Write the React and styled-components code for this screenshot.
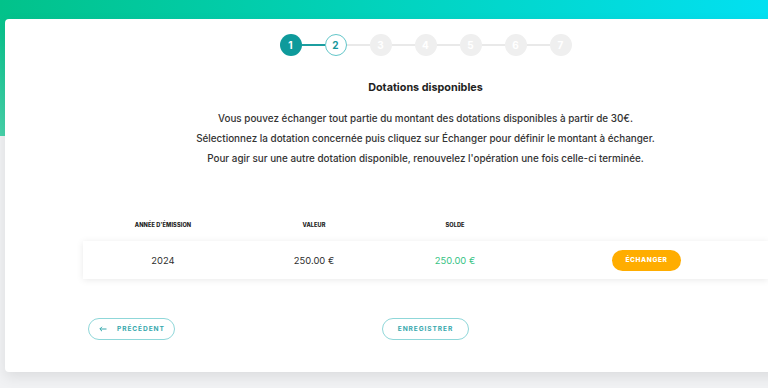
import React from "react";
import styled, { createGlobalStyle } from "styled-components";

const Global = createGlobalStyle`
  html, body { margin: 0; padding: 0; }
  body {
    overflow: hidden;
    font-family: "Inter", "Noto Sans", sans-serif;
    background:
      linear-gradient(180deg, rgba(255,255,255,0) 10%, rgba(255,255,255,0.28) 100%) 0 0 / 100% 136px no-repeat,
      linear-gradient(90deg, #02c28a 0%, #02d3bd 50%, #02e0f1 100%) 0 0 / 100% 136px no-repeat,
      #f1f2f4;
    width: 768px;
    height: 388px;
  }
`;

const Page = styled.div`
  width: 768px;
  height: 388px;
  padding-top: 19px;
  padding-left: 5px;
  box-sizing: border-box;
  overflow: hidden;
`;

const Card = styled.div`
  width: 841px;
  height: 353px;
  background: #fff;
  border-radius: 4px;
  box-shadow: 0 5px 14px rgba(0, 0, 0, 0.09);
  padding: 15px 78px 0;
  box-sizing: border-box;
  display: flex;
  flex-direction: column;
  align-items: center;
`;

const Stepper = styled.div`
  display: flex;
  align-items: center;
`;

const Step = styled.div`
  width: 22px;
  height: 22px;
  border-radius: 50%;
  box-sizing: border-box;
  display: flex;
  align-items: center;
  justify-content: center;
  font-size: 10px;
  font-weight: 700;
  background: ${(p) => (p.$state === "done" ? "#0e9a9b" : p.$state === "current" ? "#fff" : "#efefef")};
  color: ${(p) => (p.$state === "done" ? "#fff" : p.$state === "current" ? "#16979b" : "#fff")};
  border: ${(p) => (p.$state === "current" ? "1.5px solid #62c6c9" : "none")};
`;

const Connector = styled.div`
  width: 23px;
  height: 2px;
  background: ${(p) => (p.$active ? "#1c9ea0" : "#e9e9e9")};
`;

const Title = styled.h2`
  margin: 24px 0 0;
  font-size: 10.8px;
  font-weight: 700;
  color: #1f1f1f;
  line-height: 16px;
`;

const Intro = styled.div`
  margin-top: 12px;
  text-align: center;
  font-size: 9.9px;
  line-height: 20px;
  font-weight: 500;
  color: #333;
`;

const Table = styled.div`
  align-self: stretch;
  margin-top: 50px;
`;

const Grid = styled.div`
  display: grid;
  grid-template-columns: 160px 142px 140px 1fr;
  align-items: center;
  justify-items: center;
`;

const HeadRow = styled(Grid)`
  height: 14px;
  font-size: 5.6px;
  font-weight: 800;
  text-transform: uppercase;
  color: #222;
  letter-spacing: 0.1px;
`;

const BodyRow = styled(Grid)`
  margin-top: 9px;
  height: 38px;
  background: #fff;
  box-shadow: 0 1px 7px rgba(0, 0, 0, 0.09);
  font-size: 9.4px;
  color: #2e2e2e;
`;

const Cell = styled.span`
  color: ${(p) => (p.$green ? "#36c384" : "inherit")};
`;

const ExchangeButton = styled.button`
  width: 69px;
  height: 21px;
  border: none;
  border-radius: 11px;
  background: #ffad00;
  color: #fff;
  font-family: inherit;
  font-size: 6.6px;
  font-weight: 800;
  letter-spacing: 0.6px;
  padding: 0;
`;

const Actions = styled.div`
  align-self: stretch;
  margin-top: 39px;
  display: grid;
  grid-template-columns: 1fr auto 1fr;
  align-items: center;
`;

const OutlineButton = styled.button`
  justify-self: ${(p) => p.$justify || "center"};
  margin-left: ${(p) => (p.$withIcon ? "5px" : "0")};
  width: 87px;
  height: 22px;
  border: 1.5px solid #8fd7d9;
  border-radius: 11px;
  background: #fff;
  color: #37a8ad;
  font-family: inherit;
  font-size: 6.6px;
  font-weight: 700;
  letter-spacing: 0.9px;
  display: flex;
  align-items: center;
  justify-content: ${(p) => (p.$withIcon ? "flex-start" : "center")};
  gap: 10px;
  padding: ${(p) => (p.$withIcon ? "0 0 0 10px" : "0")};
  box-sizing: border-box;
`;

const Arrow = styled.svg`
  width: 8px;
  height: 6px;
`;

export default function App() {
  const steps = [1, 2, 3, 4, 5, 6, 7];
  return (
    <>
      <Global />
      <Page>
        <Card>
          <Stepper>
            {steps.map((n, i) => (
              <React.Fragment key={n}>
                {i > 0 && <Connector $active={n === 2} />}
                <Step $state={n === 1 ? "done" : n === 2 ? "current" : "todo"}>{n}</Step>
              </React.Fragment>
            ))}
          </Stepper>
          <Title>Dotations disponibles</Title>
          <Intro>
            Vous pouvez échanger tout partie du montant des dotations disponibles à partir de 30€.
            <br />
            Sélectionnez la dotation concernée puis cliquez sur Échanger pour définir le montant à échanger.
            <br />
            Pour agir sur une autre dotation disponible, renouvelez l'opération une fois celle-ci terminée.
          </Intro>
          <Table>
            <HeadRow>
              <span>Année d'émission</span>
              <span>Valeur</span>
              <span>Solde</span>
              <span />
            </HeadRow>
            <BodyRow>
              <Cell>2024</Cell>
              <Cell>250.00 €</Cell>
              <Cell $green>250.00 €</Cell>
              <ExchangeButton>ÉCHANGER</ExchangeButton>
            </BodyRow>
          </Table>
          <Actions>
            <OutlineButton $justify="start" $withIcon>
              <Arrow viewBox="0 0 8 6">
                <path d="M7.5 3H1M3 0.8L0.8 3L3 5.2" fill="none" stroke="#37a8ad" strokeWidth="1" />
              </Arrow>
              PRÉCÉDENT
            </OutlineButton>
            <OutlineButton>ENREGISTRER</OutlineButton>
            <span />
          </Actions>
        </Card>
      </Page>
    </>
  );
}
